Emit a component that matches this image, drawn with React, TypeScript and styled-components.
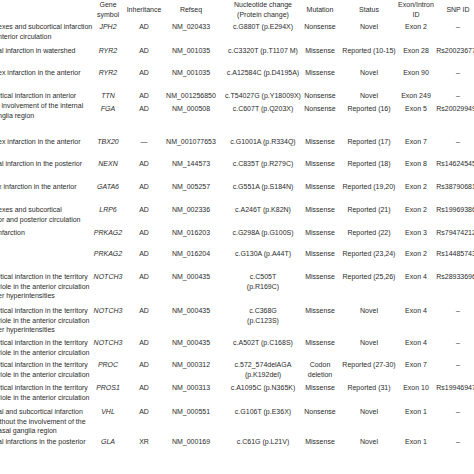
import React from "react";
import styled, { createGlobalStyle, css } from "styled-components";

const Global = createGlobalStyle`
  html, body { margin: 0; padding: 0; background: #ffffff; }
  body { width: 474px; height: 474px; overflow: hidden; }
`;

const Page = styled.div`
  width: 474px;
  height: 474px;
  overflow: hidden;
  background: #ffffff;
  color: #2b2b2b;
  font-family: "Liberation Sans", Arial, sans-serif;
  font-size: 7px;
  line-height: 9.5px;
`;

const COLS = "90px 36px 36px 58px 86px 28px 70px 24px 60px";

const HeaderRow = styled.div`
  display: grid;
  grid-template-columns: ${COLS};
  height: 22px;
  padding-bottom: 3px;
  box-sizing: border-box;
`;

const Row = styled.div<{ $h: number; $shift?: number }>`
  display: grid;
  grid-template-columns: ${COLS};
  height: ${(p) => p.$h}px;
  ${(p) =>
    p.$shift
      ? css`
          & > div:not(:first-child) {
            padding-top: ${p.$shift}px;
          }
        `
      : ""}
`;

const HeadCell = styled.div`
  display: flex;
  flex-direction: column;
  align-items: center;
  justify-content: center;
  white-space: nowrap;
`;

const Cell = styled.div<{ $italic?: boolean }>`
  display: flex;
  flex-direction: column;
  align-items: center;
  justify-content: flex-start;
  white-space: nowrap;
  font-style: ${(p) => (p.$italic ? "italic" : "normal")};
`;

const DescCell = styled.div`
  display: flex;
  flex-direction: column;
  align-items: flex-start;
  white-space: nowrap;
  margin-left: -2px;
`;

const Line = styled.div``;

type R = {
  h: number;
  shift?: number;
  desc: string[];
  gene: string;
  inh: string;
  ref: string;
  nuc: string[];
  mut: string[];
  status: string;
  exon: string;
  snp: string;
};

const T1 = "rtical infarction in the territory";
const T2 = "riole in the anterior circulation";
const T3 = "er hyperintensities";

const rows: R[] = [
  { h: 24, desc: ["exes and subcortical infarction", "nterior circulation"], gene: "JPH2", inh: "AD", ref: "NM_020433", nuc: ["c.G880T (p.E294X)"], mut: ["Nonsense"], status: "Novel", exon: "Exon 2", snp: "–" },
  { h: 22, desc: ["al infarction in watershed"], gene: "RYR2", inh: "AD", ref: "NM_001035", nuc: ["c.C3320T (p.T1107 M)"], mut: ["Missense"], status: "Reported (10-15)", exon: "Exon 28", snp: "Rs200236771" },
  { h: 23, desc: ["ex infarction in the anterior"], gene: "RYR2", inh: "AD", ref: "NM_001035", nuc: ["c.A12584C (p.D4195A)"], mut: ["Missense"], status: "Novel", exon: "Exon 90", snp: "–" },
  { h: 10, desc: ["rtical infarction in anterior"], gene: "TTN", inh: "AD", ref: "NM_001256850", nuc: ["c.T54027G (p.Y18009X)"], mut: ["Nonsense"], status: "Novel", exon: "Exon 249", snp: "–" },
  { h: 36, shift: 3, desc: ["l involvement of the internal", "nglia region"], gene: "FGA", inh: "AD", ref: "NM_000508", nuc: ["c.C607T (p.Q203X)"], mut: ["Nonsense"], status: "Reported (16)", exon: "Exon 5", snp: "Rs200299493" },
  { h: 22, desc: ["ex infarction in the anterior"], gene: "TBX20", inh: "—", ref: "NM_001077653", nuc: ["c.G1001A (p.R334Q)"], mut: ["Missense"], status: "Reported (17)", exon: "Exon 7", snp: "–" },
  { h: 23, desc: ["al infarction in the posterior"], gene: "NEXN", inh: "AD", ref: "NM_144573", nuc: ["c.C835T (p.R279C)"], mut: ["Missense"], status: "Reported (18)", exon: "Exon 8", snp: "Rs146245458" },
  { h: 23, desc: ["x infarction in the anterior"], gene: "GATA6", inh: "AD", ref: "NM_005257", nuc: ["c.G551A (p.S184N)"], mut: ["Missense"], status: "Reported (19,20)", exon: "Exon 2", snp: "Rs387906810" },
  { h: 23, desc: ["exes and subcortical", "or and posterior circulation"], gene: "LRP6", inh: "AD", ref: "NM_002336", nuc: ["c.A246T (p.K82N)"], mut: ["Missense"], status: "Reported (21)", exon: "Exon 2", snp: "Rs199693865" },
  { h: 21, desc: ["nfarction"], gene: "PRKAG2", inh: "AD", ref: "NM_016203", nuc: ["c.G298A (p.G100S)"], mut: ["Missense"], status: "Reported (22)", exon: "Exon 3", snp: "Rs794742129" },
  { h: 23, desc: [], gene: "PRKAG2", inh: "AD", ref: "NM_016204", nuc: ["c.G130A (p.A44T)"], mut: ["Missense"], status: "Reported (23,24)", exon: "Exon 2", snp: "Rs144857433" },
  { h: 34, desc: [T1, T2, T3], gene: "NOTCH3", inh: "AD", ref: "NM_000435", nuc: ["c.C505T", "(p.R169C)"], mut: ["Missense"], status: "Reported  (25,26)", exon: "Exon 4", snp: "Rs289336967" },
  { h: 32, desc: [T1, T2, T3], gene: "NOTCH3", inh: "AD", ref: "NM_000435", nuc: ["c.C368G", "(p.C123S)"], mut: ["Missense"], status: "Novel", exon: "Exon 4", snp: "–" },
  { h: 22, desc: [T1, T2], gene: "NOTCH3", inh: "AD", ref: "NM_000435", nuc: ["c.A502T (p.C168S)"], mut: ["Missense"], status: "Novel", exon: "Exon 4", snp: "–" },
  { h: 23, desc: [T1, T2], gene: "PROC", inh: "AD", ref: "NM_000312", nuc: ["c.572_574delAGA", "(p.K192del)"], mut: ["Codon", "deletion"], status: "Reported (27-30)", exon: "Exon 7", snp: "–" },
  { h: 24, desc: [T1, T2], gene: "PROS1", inh: "AD", ref: "NM_000313", nuc: ["c.A1095C (p.N365K)"], mut: ["Missense"], status: "Reported (31)", exon: "Exon 10", snp: "Rs199469470" },
  { h: 30, desc: ["al and subcortical infarction", "ithout the involvement of the", "asal ganglia region"], gene: "VHL", inh: "AD", ref: "NM_000551", nuc: ["c.G106T (p.E36X)"], mut: ["Nonsense"], status: "Novel", exon: "Exon 1", snp: "–" },
  { h: 30, desc: ["al infarctions in the posterior"], gene: "GLA", inh: "XR", ref: "NM_000169", nuc: ["c.C61G (p.L21V)"], mut: ["Missense"], status: "Novel", exon: "Exon 1", snp: "–" },
];

export default function App() {
  return (
    <Page>
      <Global />
      <HeaderRow>
        <HeadCell />
        <HeadCell>
          <Line>Gene</Line>
          <Line>symbol</Line>
        </HeadCell>
        <HeadCell>Inheritance</HeadCell>
        <HeadCell>Refseq</HeadCell>
        <HeadCell>
          <Line>Nucleotide change</Line>
          <Line>(Protein change)</Line>
        </HeadCell>
        <HeadCell>Mutation</HeadCell>
        <HeadCell>Status</HeadCell>
        <HeadCell>
          <Line>Exon/Intron</Line>
          <Line>ID</Line>
        </HeadCell>
        <HeadCell>SNP ID</HeadCell>
      </HeaderRow>
      {rows.map((r, i) => (
        <Row key={i} $h={r.h} $shift={r.shift}>
          <DescCell>
            {r.desc.map((d, j) => (
              <Line key={j}>{d}</Line>
            ))}
          </DescCell>
          <Cell $italic>{r.gene}</Cell>
          <Cell>{r.inh}</Cell>
          <Cell>{r.ref}</Cell>
          <Cell>
            {r.nuc.map((d, j) => (
              <Line key={j}>{d}</Line>
            ))}
          </Cell>
          <Cell>
            {r.mut.map((d, j) => (
              <Line key={j}>{d}</Line>
            ))}
          </Cell>
          <Cell>{r.status}</Cell>
          <Cell>{r.exon}</Cell>
          <Cell>{r.snp}</Cell>
        </Row>
      ))}
    </Page>
  );
}
